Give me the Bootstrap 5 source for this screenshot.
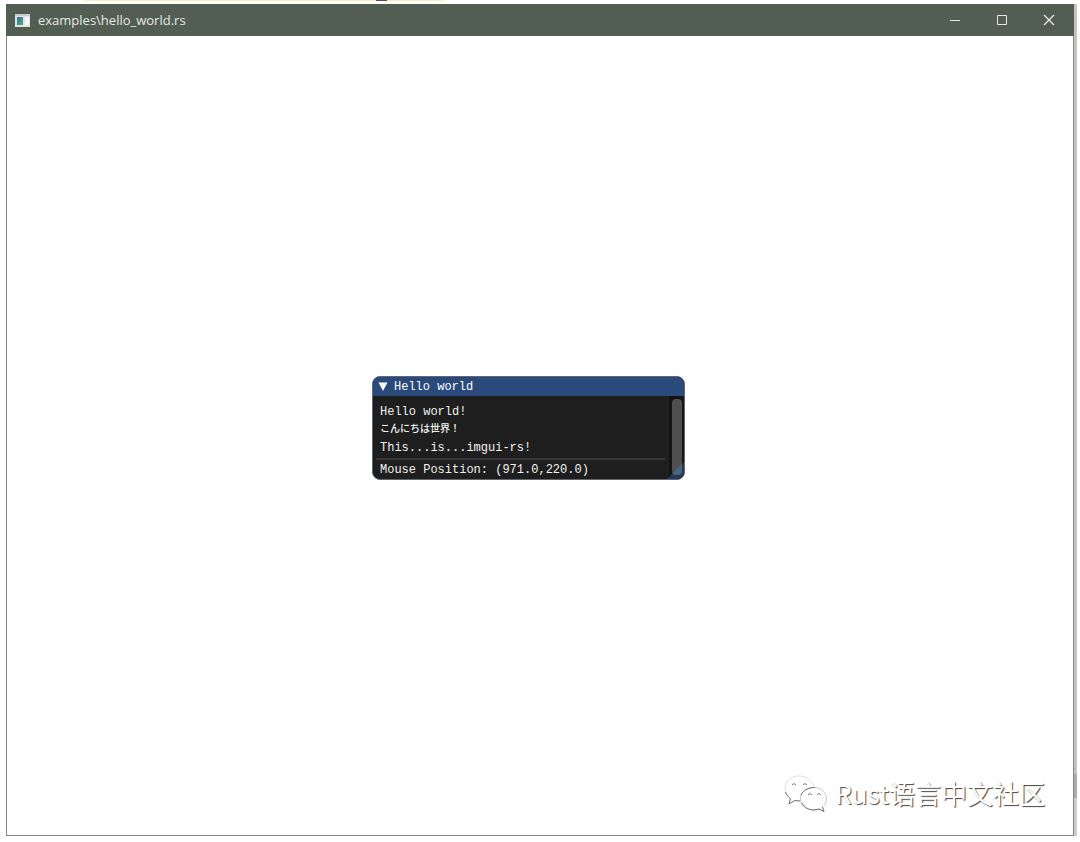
<!DOCTYPE html>
<html lang="zh-CN">
<head>
<meta charset="utf-8">
<meta name="viewport" content="width=device-width, initial-scale=1">
<title>examples\hello_world.rs</title>
<link href="https://cdn.jsdelivr.net/npm/bootstrap@5.3.0/dist/css/bootstrap.min.css" rel="stylesheet">
<style>
  body { background: #fff; font-family: "Open Sans", "Noto Sans CJK SC", sans-serif; }
  .behind-top { height: 4px; padding-left: 83px; }
  .behind-line { width: 362px; height: 1px; background: #fbeec0; }
  .behind-mark { width: 11px; height: 1px; margin-left: 293px; background: #5c4c50; }
  .behind-side { width: 3px; background: linear-gradient(#c6c2c2 0 770px, #aeabab 770px 794px, #cfcccc 794px); }
  .frame { padding: 0 3px 6px 6px; }
  .app-window { border: 1px solid #7d857f; border-top: 0; }
  .title-bar { height: 32px; background: #535e53; color: #e4e8e4; margin: 0 -1px; padding: 0 2px 0 9px; font-size: 13px; line-height: 16px; }
  .win-btn { width: 47px; height: 32px; border: 0; border-radius: 0; padding: 0; color: #e6e9e6; background: transparent; }
  .win-btn svg { display: block; margin: 0 auto; }
  .tool-window { left: 365px; top: 340px; width: 313px; border: 1px solid #64656e; border-radius: 8px; background: #1e1e1e; color: #f2f2f2; font-family: "Liberation Mono", "Noto Sans CJK JP", monospace; font-size: 12px; line-height: 18px; }
  .tool-title { height: 19px; background: #294a7a; padding: 0 5px; gap: 6px; border: 0; color: #fff; }
  .tool-body { height: 83px; }
  .tool-text { padding: 7px 4px 0 3px; }
  .tool-text p { padding-left: 4px; }
  .tool-text .ja { font-size: 10px; font-weight: 500; }
  .rule { height: 2px; background: #36363b; margin-top: 1px; margin-bottom: 1px; }
  .scroll-track { width: 15px; background: #141414; padding: 3px 2px 4px 3px; }
  .scroll-thumb { width: 10px; border-radius: 4px; background: #4f4f4f; }
  .grip { right: 0; bottom: 0; }
  .watermark { right: 28px; bottom: 22px; color: #fff; font-family: "Noto Sans CJK SC", sans-serif; font-size: 26px; line-height: 40px; text-shadow: 1px 1px 1px #444; }
</style>
</head>
<body class="vh-100 d-flex flex-column overflow-hidden">
  <div class="behind-top flex-shrink-0"><div class="behind-line d-flex"><div class="behind-mark"></div></div></div>
  <div class="frame flex-grow-1 d-flex">
    <main class="app-window flex-grow-1 d-flex flex-column">
      <header class="title-bar d-flex align-items-center flex-shrink-0">
        <svg class="me-2" width="15" height="13" viewBox="0 0 15 13" aria-hidden="true">
          <defs><linearGradient id="pane" x2="1" y2="1"><stop stop-color="#3b6d9c"/><stop offset="1" stop-color="#4fae78"/></linearGradient></defs>
          <rect width="15" height="13" fill="#dfe4e8"/><rect width="15" height="2" fill="#c3cbd0"/>
          <rect x="2" y="3" width="6" height="8" fill="url(#pane)"/><rect x="10" y="3" width="4" height="8" fill="#f6f6f6"/>
        </svg>
        <span class="flex-grow-1">examples\hello_world.rs</span>
        <button class="btn win-btn" aria-label="Minimize"><svg width="12" height="12" fill="none" stroke="currentColor"><path d="M1 6.500h10"/></svg></button>
        <button class="btn win-btn" aria-label="Maximize"><svg width="12" height="12" fill="none" stroke="currentColor"><path d="M1.500 1.500h9v9h-9z"/></svg></button>
        <button class="btn win-btn" aria-label="Close"><svg width="12" height="12" fill="none" stroke="currentColor" stroke-width="1.300"><path d="M1 1l10 10M11 1L1 11"/></svg></button>
      </header>
      <div class="position-relative flex-grow-1">
        <section class="tool-window position-absolute overflow-hidden">
          <button class="tool-title w-100 d-flex align-items-center text-start">
            <svg width="10" height="10" aria-hidden="true"><path d="M0.500 0.500h9L5 9z" fill="#fff"/></svg>
            <span>Hello world</span>
          </button>
          <div class="tool-body d-flex">
            <div class="tool-text flex-grow-1">
              <p class="m-0">Hello world!</p>
              <p class="m-0 ja" lang="ja">こんにちは世界！</p>
              <p class="m-0">This...is...imgui-rs!</p>
              <div class="rule"></div>
              <p class="m-0">Mouse Position: (971.0,220.0)</p>
            </div>
            <div class="scroll-track d-flex"><div class="scroll-thumb"></div></div>
          </div>
          <svg class="grip position-absolute" width="17" height="17" aria-hidden="true"><path d="M17 0v17H0z" fill="#4296fa" fill-opacity=".3"/></svg>
        </section>
        <div class="watermark position-absolute d-flex align-items-center gap-2">
          <svg width="43" height="38" viewBox="0 0 43 38" fill="#fff" stroke-linejoin="round" aria-hidden="true">
            <path d="M15 2C7 2 1 7 1 14.500c0 4 2 7.500 5.500 10L5 30l6-3.500 5 .5C16 19 22 13.500 30 13.500 28 6 22 2 15 2z" stroke="#d5d5d5" stroke-width=".8"/>
            <path d="M1.500 18c1 3 2.500 5 5 6.500L5 30l6-3.500 5 .5" fill="none" stroke="#777"/>
            <path d="M30 13.500c-8 0-13.500 5-13.500 11.500S22 36 30 36l5-1 5 2.500-1.500-4.500C41 31 42.500 28 42.500 25 42.500 18.500 37 13.500 30 13.500z" stroke="#bbb" stroke-width=".8"/>
            <path d="M18 29c2 4.500 7 7 12 7l5-1 5 2.500-1.500-4.500M17 21c2-4.500 7-7.500 14-7.500" fill="none" stroke="#777"/>
            <path d="M8 11q2-3 4 0M19 11q2-3 4 0M24 21q2-3 4 0M33 21q2-3 4 0" fill="none" stroke="#777"/>
          </svg>
          <span>Rust语言中文社区</span>
        </div>
      </div>
    </main>
    <div class="behind-side"></div>
  </div>
<script src="https://cdn.jsdelivr.net/npm/bootstrap@5.3.0/dist/js/bootstrap.bundle.min.js"></script>
</body>
</html>
